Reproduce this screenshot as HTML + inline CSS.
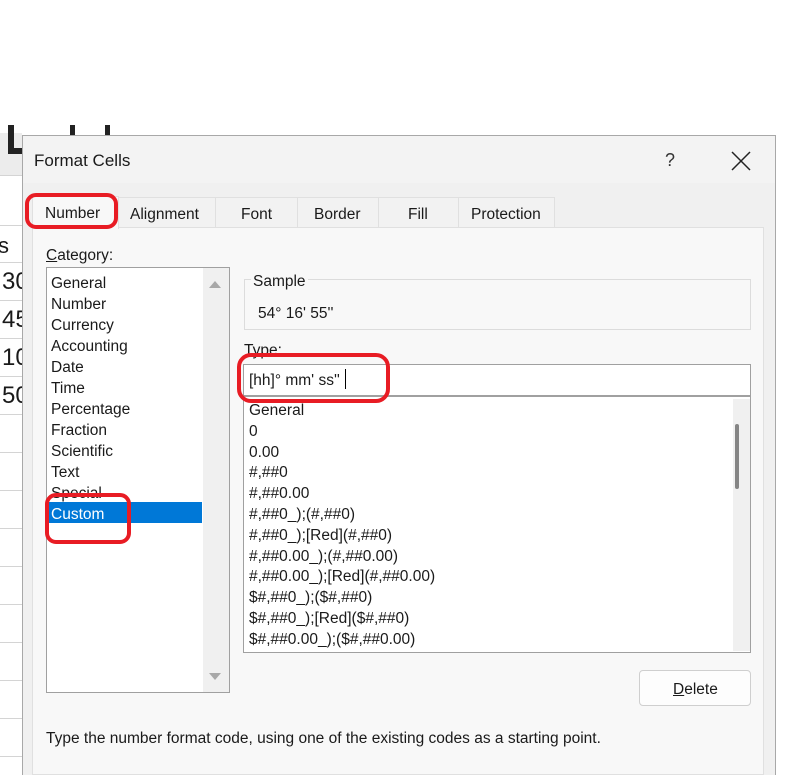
<!DOCTYPE html>
<html><head><meta charset="utf-8"><style>
*{margin:0;padding:0;box-sizing:border-box}
body{width:790px;height:772px;background:#fff;position:relative;overflow:hidden;font-family:"Segoe UI","Liberation Sans",sans-serif;font-size:15.5px;color:#1a1a1a}
.a{position:absolute}
.t{position:absolute;white-space:nowrap;line-height:21px}
.red{position:absolute;border:4px solid #e81c24;border-radius:11px}
</style></head><body>
<div class="a" style="left:0;top:133px;width:22px;height:639px;background:#fff"></div>
<div class="a" style="left:0;top:133px;width:22px;height:42px;background:#ececec"></div>
<div class="a" style="left:0;top:175px;width:22px;height:1px;background:#d4d4d4"></div>
<div class="a" style="left:0;top:225px;width:22px;height:1px;background:#d4d4d4"></div>
<div class="a" style="left:0;top:262px;width:22px;height:1px;background:#d4d4d4"></div>
<div class="a" style="left:0;top:300px;width:22px;height:1px;background:#d4d4d4"></div>
<div class="a" style="left:0;top:338px;width:22px;height:1px;background:#d4d4d4"></div>
<div class="a" style="left:0;top:376px;width:22px;height:1px;background:#d4d4d4"></div>
<div class="a" style="left:0;top:414px;width:22px;height:1px;background:#d4d4d4"></div>
<div class="a" style="left:0;top:452px;width:22px;height:1px;background:#d4d4d4"></div>
<div class="a" style="left:0;top:490px;width:22px;height:1px;background:#d4d4d4"></div>
<div class="a" style="left:0;top:528px;width:22px;height:1px;background:#d4d4d4"></div>
<div class="a" style="left:0;top:566px;width:22px;height:1px;background:#d4d4d4"></div>
<div class="a" style="left:0;top:604px;width:22px;height:1px;background:#d4d4d4"></div>
<div class="a" style="left:0;top:642px;width:22px;height:1px;background:#d4d4d4"></div>
<div class="a" style="left:0;top:680px;width:22px;height:1px;background:#d4d4d4"></div>
<div class="a" style="left:0;top:718px;width:22px;height:1px;background:#d4d4d4"></div>
<div class="a" style="left:0;top:756px;width:22px;height:1px;background:#d4d4d4"></div>
<div class="t" style="left:-2px;top:233px;font-size:22px;line-height:26px">s</div>
<div class="t" style="left:2px;top:268px;font-size:24px;line-height:28px">30</div>
<div class="t" style="left:2px;top:306px;font-size:24px;line-height:28px">45</div>
<div class="t" style="left:2px;top:344px;font-size:24px;line-height:28px">10</div>
<div class="t" style="left:2px;top:382px;font-size:24px;line-height:28px">50</div>
<div class="a" style="left:8px;top:125px;width:6px;height:28px;background:#222"></div>
<div class="a" style="left:8px;top:148px;width:16px;height:6px;background:#222"></div>
<div class="a" style="left:70px;top:125px;width:5px;height:12px;background:#222"></div>
<div class="a" style="left:105px;top:125px;width:5px;height:12px;background:#222"></div>
<div class="a" style="left:22px;top:135px;width:754px;height:640px;background:#f0f0f0;border:1px solid #a8a8a8;border-bottom:none"></div>
<div class="a" style="left:23px;top:136px;width:752px;height:47px;background:#f3f3f3"></div>
<div class="t" style="left:34px;top:150px;font-size:17px">Format Cells</div>
<div class="t" style="left:665px;top:150px;font-size:18px;color:#333">?</div>
<svg class="a" style="left:731px;top:151px" width="20" height="20"><path d="M1 1L19 19M19 1L1 19" stroke="#222" stroke-width="1.5"/></svg>
<div class="a" style="left:32px;top:227px;width:732px;height:548px;background:#f8f8f8;border:1px solid #e0e0e0"></div>
<div class="a" style="left:32px;top:196px;width:87px;height:33px;background:#f8f8f8;border:1px solid #e0e0e0;border-bottom:none"></div>
<div class="t" style="left:45px;top:203px">Number</div>
<div class="a" style="left:118px;top:197px;width:437px;height:30px;background:#f2f2f2;border:1px solid #e0e0e0;border-bottom:none"></div>
<div class="a" style="left:215px;top:197px;width:1px;height:30px;background:#e0e0e0"></div>
<div class="a" style="left:297px;top:197px;width:1px;height:30px;background:#e0e0e0"></div>
<div class="a" style="left:378px;top:197px;width:1px;height:30px;background:#e0e0e0"></div>
<div class="a" style="left:458px;top:197px;width:1px;height:30px;background:#e0e0e0"></div>
<div class="t" style="left:130px;top:204px">Alignment</div>
<div class="t" style="left:241px;top:204px">Font</div>
<div class="t" style="left:314px;top:204px">Border</div>
<div class="t" style="left:408px;top:204px">Fill</div>
<div class="t" style="left:471px;top:204px">Protection</div>
<div class="t" style="left:46px;top:245px"><u>C</u>ategory:</div>
<div class="a" style="left:46px;top:267px;width:184px;height:426px;background:#fff;border:1px solid #a0a0a0"></div>
<div class="a" style="left:203px;top:268px;width:26px;height:424px;background:#f0f0f0"></div>
<svg class="a" style="left:208px;top:279px" width="14" height="10"><path d="M1 9L7 2L13 9Z" fill="#a8a8a8"/></svg>
<svg class="a" style="left:208px;top:672px" width="14" height="10"><path d="M1 1L7 8L13 1Z" fill="#a8a8a8"/></svg>
<div class="a" style="left:47px;top:502px;width:155px;height:21px;background:#0078d7"></div>
<div class="t" style="left:51px;top:273px;line-height:21px">General<br>Number<br>Currency<br>Accounting<br>Date<br>Time<br>Percentage<br>Fraction<br>Scientific<br>Text<br>Special<br><span style="color:#fff">Custom</span></div>
<div class="a" style="left:244px;top:279px;width:507px;height:51px;border:1px solid #dcdcdc"></div>
<div class="t" style="left:251px;top:271px;background:#f8f8f8;padding:0 2px">Sample</div>
<div class="t" style="left:258px;top:303px">54° 16' 55''</div>
<div class="t" style="left:244px;top:340px"><u>T</u>ype:</div>
<div class="a" style="left:243px;top:364px;width:508px;height:32px;background:#fff;border:1px solid #a0a0a0"></div>
<div class="t" style="left:249px;top:370px">[hh]° mm' ss''</div>
<div class="a" style="left:345px;top:369px;width:1px;height:20px;background:#000"></div>
<div class="a" style="left:243px;top:396px;width:508px;height:257px;background:#fff;border:1px solid #a0a0a0;overflow:hidden">
<div class="a" style="left:489px;top:2px;width:17px;height:252px;background:#f0f0f0"></div>
<div class="a" style="left:491px;top:27px;width:4px;height:65px;border-radius:2px;background:#858585"></div>
<div class="t" style="left:5px;top:4px;line-height:20.8px">General<br>0<br>0.00<br>#,##0<br>#,##0.00<br>#,##0_);(#,##0)<br>#,##0_);[Red](#,##0)<br>#,##0.00_);(#,##0.00)<br>#,##0.00_);[Red](#,##0.00)<br>$#,##0_);($#,##0)<br>$#,##0_);[Red]($#,##0)<br>$#,##0.00_);($#,##0.00)</div>
</div>
<div class="a" style="left:639px;top:670px;width:112px;height:36px;background:#fdfdfd;border:1px solid #cfcfcf;border-radius:4px"></div>
<div class="t" style="left:673px;top:679px"><u>D</u>elete</div>
<div class="t" style="left:46px;top:728px">Type the number format code, using one of the existing codes as a starting point.</div>
<div class="red" style="left:25px;top:193px;width:93px;height:36px"></div>
<div class="red" style="left:237px;top:353px;width:153px;height:50px;border-radius:14px"></div>
<div class="red" style="left:45px;top:493px;width:86px;height:51px"></div>
</body></html>
